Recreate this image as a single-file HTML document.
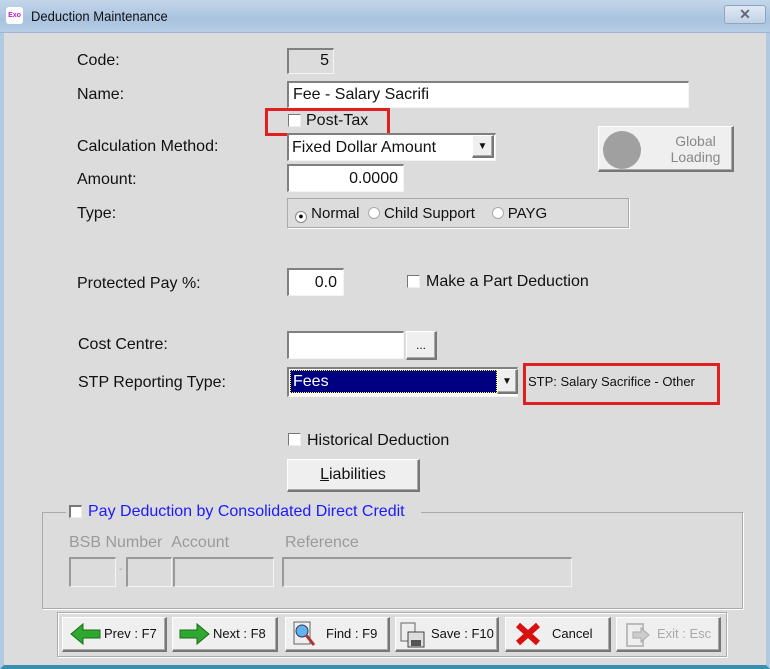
<!DOCTYPE html>
<html><head><meta charset="utf-8"><style>
*{box-sizing:border-box;margin:0;padding:0}
body{width:770px;height:669px;overflow:hidden;background:#dcdcdc;font-family:"Liberation Sans",sans-serif;font-size:16px;color:#111;position:relative}
.a{position:absolute;white-space:nowrap}
.title{left:0;top:0;width:770px;height:33px;background:linear-gradient(#c4d6ea,#a9c3df 60%,#b6cde6);border-bottom:1px solid #9fb5cf}
.frame{left:0;top:33px;width:770px;height:636px;border-left:4px solid #b2c9e2;border-right:4px solid #b2c9e2;border-bottom:4px solid #3a8fb0;background:#dcdcdc}
.in{background:#fff;border-top:2px solid #808080;border-left:2px solid #808080;border-right:1px solid #f4f4f4;border-bottom:1px solid #f4f4f4}
.dis{background:#dcdcdc}
.btn{background:#efefef;border:1px solid #fff;border-right:2px solid #777;border-bottom:2px solid #777;box-shadow:inset -1px -1px 0 #aaa}
.cb{width:13px;height:13px;background:#fff;border-top:1px solid #777;border-left:1px solid #777;border-right:1px solid #eee;border-bottom:1px solid #eee}
.red{border:3px solid #e0201f}
.grp{border:1px solid #aaa;box-shadow:1px 1px 0 #fff}
.g{color:#9a9a9a}
</style></head><body>
<div class="a title"></div>
<div class="a" style="left:6px;top:7px;width:17px;height:17px;background:#fff;border-radius:3px;font-size:7px;color:#c020c0;line-height:17px;text-align:center;font-weight:bold">Exo</div>
<div class="a" style="left:31px;top:8px;font-size:14px;color:#111;transform:scaleX(0.93);transform-origin:left">Deduction Maintenance</div>
<div class="a" style="left:724px;top:5px;width:42px;height:19px;border:1px solid #8ea6c2;border-radius:3px;background:linear-gradient(#dfe9f4,#c2d3e6);color:#667;font-size:14px;text-align:center;line-height:17px;font-weight:bold">✕</div>
<div class="a frame"></div>

<div class="a" style="left:77px;top:52px">Code:</div>
<div class="a in dis" style="left:287px;top:48px;width:47px;height:26px;text-align:right;padding:2px 4px">5</div>
<div class="a" style="left:77px;top:86px">Name:</div>
<div class="a in" style="left:287px;top:81px;width:402px;height:27px;padding:3px 4px">Fee - Salary Sacrifi</div>
<div class="a red" style="left:265px;top:108px;width:125px;height:28px"></div>
<div class="a cb" style="left:288px;top:114px"></div>
<div class="a" style="left:306px;top:112px">Post-Tax</div>
<div class="a" style="left:77px;top:138px">Calculation Method:</div>
<div class="a in" style="left:287px;top:133px;width:209px;height:28px;padding:4px 3px">Fixed Dollar Amount</div>
<div class="a btn" style="left:472px;top:135px;width:22px;height:23px;font-size:10px;text-align:center;line-height:21px">▼</div>
<div class="a btn" style="left:598px;top:126px;width:136px;height:46px;color:#888;font-size:14px;line-height:16px;text-align:center;padding:6px 0 0 60px">Global<br>Loading</div>
<div class="a" style="left:603px;top:131px;width:38px;height:38px;border-radius:50%;background:#a0a0a0"></div>
<div class="a" style="left:77px;top:171px">Amount:</div>
<div class="a in" style="left:287px;top:164px;width:117px;height:28px;text-align:right;padding:4px 5px">0.0000</div>
<div class="a" style="left:77px;top:205px">Type:</div>
<div class="a grp" style="left:287px;top:198px;width:342px;height:30px"></div>
<div class="a" style="left:295px;top:205px;font-size:15px"><span style="display:inline-block;width:12px;height:12px;border-radius:50%;background:#fff;border:1px solid #888;vertical-align:-1px;text-align:center;line-height:9px;font-size:9px">●</span> Normal &nbsp;<span style="display:inline-block;width:12px;height:12px;border-radius:50%;background:#fff;border:1px solid #aaa;vertical-align:-1px"></span> Child Support &nbsp; &nbsp;<span style="display:inline-block;width:12px;height:12px;border-radius:50%;background:#fff;border:1px solid #aaa;vertical-align:-1px"></span> PAYG</div>

<div class="a" style="left:77px;top:275px">Protected Pay %:</div>
<div class="a in" style="left:287px;top:268px;width:57px;height:28px;text-align:right;padding:4px 6px">0.0</div>
<div class="a cb" style="left:407px;top:275px"></div>
<div class="a" style="left:426px;top:273px">Make a Part Deduction</div>

<div class="a" style="left:78px;top:336px">Cost Centre:</div>
<div class="a in" style="left:287px;top:331px;width:117px;height:28px"></div>
<div class="a btn" style="left:406px;top:331px;width:31px;height:29px;text-align:center;font-size:12px;line-height:26px">...</div>
<div class="a" style="left:78px;top:374px">STP Reporting Type:</div>
<div class="a in" style="left:287px;top:367px;width:231px;height:30px"></div>
<div class="a" style="left:290px;top:370px;width:207px;height:23px;background:#000080;color:#fff;border:1px dotted #ff0;padding:2px 2px">Fees</div>
<div class="a btn" style="left:497px;top:369px;width:21px;height:25px;font-size:10px;text-align:center;line-height:23px">▼</div>
<div class="a red" style="left:523px;top:363px;width:197px;height:42px"></div>
<div class="a" style="left:528px;top:374px;font-size:13px">STP: Salary Sacrifice - Other</div>

<div class="a cb" style="left:288px;top:433px"></div>
<div class="a" style="left:307px;top:432px">Historical Deduction</div>
<div class="a btn" style="left:287px;top:459px;width:133px;height:33px;text-align:center;line-height:30px"><u>L</u>iabilities</div>

<div class="a grp" style="left:42px;top:512px;width:701px;height:97px"></div>
<div class="a" style="left:66px;top:503px;width:355px;height:18px;background:#dcdcdc"></div>
<div class="a cb" style="left:69px;top:505px;border-width:2px 1px 1px 2px"></div>
<div class="a" style="left:88px;top:503px;color:#1a1aff">Pay Deduction by Consolidated Direct Credit</div>
<div class="a g" style="left:69px;top:534px">BSB Number &nbsp;Account</div>
<div class="a g" style="left:285px;top:534px">Reference</div>
<div class="a in dis" style="left:69px;top:557px;width:47px;height:30px;border-color:#999 #f4f4f4 #f4f4f4 #999"></div>
<div class="a g" style="left:119px;top:564px;font-size:10px">-</div>
<div class="a in dis" style="left:126px;top:557px;width:46px;height:30px;border-color:#999 #f4f4f4 #f4f4f4 #999"></div>
<div class="a in dis" style="left:173px;top:557px;width:101px;height:30px;border-color:#999 #f4f4f4 #f4f4f4 #999"></div>
<div class="a in dis" style="left:282px;top:557px;width:290px;height:30px;border-color:#999 #f4f4f4 #f4f4f4 #999"></div>

<div class="a" style="left:57px;top:612px;width:670px;height:45px;border:1px solid #aaa;box-shadow:inset 1px 1px 0 #fff,1px 1px 0 #fff"></div>
<div class="a btn" style="left:62px;top:617px;width:105px;height:35px;font-size:13px;padding:8px 0 0 41px">Prev : F7</div>
<svg class="a" style="left:70px;top:622px" width="32" height="24"><path d="M1 12 L13 2 V8 H30 V16 H13 V22 Z" fill="#2fa82f" stroke="#1a6e1a"/></svg>
<div class="a btn" style="left:172px;top:617px;width:106px;height:35px;font-size:13px;padding:8px 0 0 40px">Next : F8</div>
<svg class="a" style="left:178px;top:622px" width="32" height="24"><path d="M31 12 L19 2 V8 H2 V16 H19 V22 Z" fill="#2fa82f" stroke="#1a6e1a"/></svg>
<div class="a btn" style="left:285px;top:617px;width:105px;height:35px;font-size:13px;padding:8px 0 0 40px">Find : F9</div>
<svg class="a" style="left:291px;top:620px" width="28" height="28"><rect x="3" y="2" width="16" height="22" fill="#eee" stroke="#666"/><circle cx="11" cy="11" r="6" fill="#5fb3f0" stroke="#335"/><path d="M15 15 L23 25" stroke="#a33" stroke-width="3"/></svg>
<div class="a btn" style="left:395px;top:617px;width:104px;height:35px;font-size:13px;padding:8px 0 0 35px">Save : F10</div>
<svg class="a" style="left:399px;top:621px" width="28" height="28"><rect x="2" y="2" width="14" height="18" fill="#eee" stroke="#666"/><rect x="9" y="11" width="16" height="15" fill="#ddd" stroke="#444"/><rect x="12" y="19" width="10" height="6" fill="#555"/></svg>
<div class="a btn" style="left:505px;top:617px;width:106px;height:35px;font-size:13px;padding:8px 0 0 46px">Cancel</div>
<svg class="a" style="left:514px;top:621px" width="28" height="26"><path d="M4 4 L24 22 M24 4 L4 22" stroke="#d81010" stroke-width="6"/></svg>
<div class="a btn" style="left:616px;top:617px;width:105px;height:35px;font-size:13px;padding:8px 0 0 40px;color:#aaa">Exit : Esc</div>
<svg class="a" style="left:624px;top:622px" width="28" height="26"><rect x="3" y="2" width="16" height="22" fill="none" stroke="#bbb" stroke-width="2"/><path d="M9 10 H17 V6 L25 13 L17 20 V16 H9Z" fill="#ccc" stroke="#aaa"/></svg>
</body></html>
